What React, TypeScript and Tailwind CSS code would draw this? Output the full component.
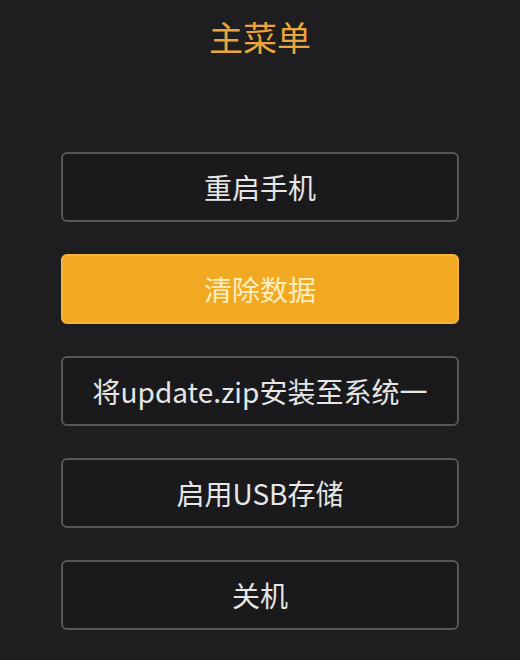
const ITEMS = [
  { label: '重启手机', active: false },
  { label: '清除数据', active: true },
  { label: '将update.zip安装至系统一', active: false },
  { label: '启用USB存储', active: false },
  { label: '关机', active: false },
];

export default function App() {
  return (
    <div
      className="flex h-[660px] w-[520px] flex-col items-center overflow-hidden bg-[#1e1e20]"
      style={{ fontFamily: '"Noto Sans CJK SC", "Noto Sans", sans-serif' }}
    >
      <h1 className="pt-[20px] text-[34px] leading-none text-[#eba53a]">主菜单</h1>

      <div className="mt-[98px] flex w-full flex-col gap-[32px] px-[61px]">
        {ITEMS.map((item) => (
          <button
            key={item.label}
            className={
              item.active
                ? 'flex h-[70px] items-center justify-center rounded-[6px] border-2 border-[#f5b540] bg-[#f2a922] text-[28px] text-[#faeec0]'
                : 'flex h-[70px] items-center justify-center rounded-[6px] border-2 border-[#57575a] bg-[#1a1a1c] text-[28px] text-[#e6e6e6]'
            }
          >
            {item.label}
          </button>
        ))}
      </div>
    </div>
  );
}
